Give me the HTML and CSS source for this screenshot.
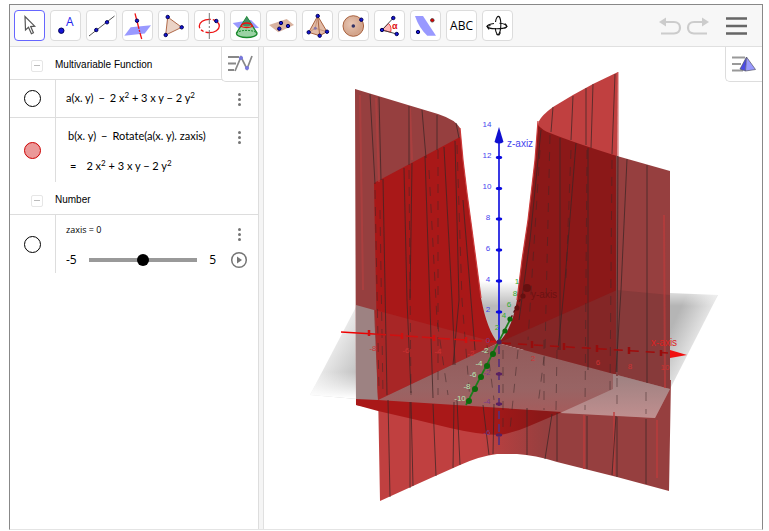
FILE: index.html
```html
<!DOCTYPE html>
<html lang="en">
<head>
    <meta charset="utf-8">
    <title>3D Calculator</title>
    <link rel="stylesheet" href="styles.css">
</head>
<body>
    <div class="app">
        <header class="toolbar">
            <div class="tools">
                <button type="button" class="tool active" aria-label="Move">
                    <svg viewBox="0 0 29 29"><path d="M10 5.5L10.5 19L13.5 16.3L16.4 22.8L18.4 21.8L15.7 15.6L19.7 15.2Z" fill="#fff" stroke="#555" stroke-width="1.2"/></svg>
                </button>
                <button type="button" class="tool" aria-label="Point">
                    <svg viewBox="0 0 29 29"><circle class="pt" cx="10.3" cy="19.7" r="2.7"/><text x="15" y="15" class="point-name">A</text></svg>
                </button>
                <button type="button" class="tool" aria-label="Line">
                    <svg viewBox="0 0 29 29"><path d="M2 25L27.5 5" stroke="#555"/><circle class="pt" cx="9.3" cy="19" r="1.7"/><circle class="pt" cx="20" cy="11.3" r="1.7"/></svg>
                </button>
                <button type="button" class="tool" aria-label="Perpendicular line">
                    <svg viewBox="0 0 29 29"><path d="M1.3 24.7L7.7 16.3L28 14.3L21.7 22.5Z" fill="#9999ff"/><path d="M12 2.3L15.5 16" stroke="#e11" stroke-width="1.3"/><path d="M15.5 16L17 22" stroke="#e11" stroke-width="1.3" stroke-dasharray="2 1"/><path d="M17 22L18.7 28" stroke="#e11" stroke-width="1.3"/><circle class="pt" cx="14" cy="9.7" r="1.7"/></svg>
                </button>
                <button type="button" class="tool" aria-label="Polygon">
                    <svg viewBox="0 0 29 29"><path d="M8.7 6L22.7 16.3L6.7 24Z" fill="#ebd3c6" stroke="#b06a4a"/><circle class="pt" cx="8.7" cy="6" r="1.7"/><circle class="pt" cx="22.7" cy="16.3" r="1.7"/><circle class="pt" cx="6.7" cy="24" r="1.7"/></svg>
                </button>
                <button type="button" class="tool" aria-label="Circle with axis">
                    <svg viewBox="0 0 29 29"><ellipse cx="14.3" cy="15" rx="10" ry="6.7" fill="none" stroke="#e11" stroke-width="1.3" stroke-dasharray="17 2 3 2"/><path d="M14.3 2V13M14.3 15V17M14.3 19V28" stroke="#777"/><circle class="pt" cx="21.3" cy="10" r="1.7"/></svg>
                </button>
                <button type="button" class="tool" aria-label="Intersect two surfaces">
                    <svg viewBox="0 0 29 29"><path d="M1.7 12L20 9L28 17L8 18Z" fill="#9999ff"/><path d="M15.7 6L5.5 22C5 28 26.5 28 26 22Z" fill="#9bd3a4" stroke="#1a8a2c" stroke-width="1.3"/><path d="M5.5 22C9 18.5 22 18.5 26 22" fill="none" stroke="#1a8a2c" stroke-dasharray="2 1"/><path d="M15.7 6L11 14Q15.7 17 20.5 14Z" fill="#3f8f68"/><path d="M10 15.5Q11 12 15.7 12T21.5 15.5Q15.7 17.500 10 15.5Z" fill="none" stroke="#e11" stroke-width="1.3"/></svg>
                </button>
                <button type="button" class="tool" aria-label="Plane through 3 points">
                    <svg viewBox="0 0 29 29"><path d="M2 14L19.7 8L27 14L11.3 21.3Z" fill="#d9b3a0"/><circle class="pt" cx="14" cy="12" r="1.7"/><circle class="pt" cx="21" cy="15" r="1.7"/><circle class="pt" cx="12.3" cy="17.7" r="1.7"/></svg>
                </button>
                <button type="button" class="tool" aria-label="Pyramid">
                    <svg viewBox="0 0 29 29"><path d="M14.7 5L5.7 21.3L16.7 24.7L24 20.7Z" fill="#e2bba6" stroke="#a9623f"/><path d="M14.7 5L16.7 24.7" stroke="#a9623f"/><path d="M14.7 5L12.3 17.3L5.7 21.3M12.3 17.3L24 20.7" stroke="#b98266" fill="none" stroke-width=".7"/><circle cx="12.3" cy="17.3" r="1.5" fill="#8877aa"/><circle class="pt" cx="14.7" cy="5" r="1.7"/><circle class="pt" cx="5.7" cy="21.3" r="1.7"/><circle class="pt" cx="16.7" cy="24.7" r="1.7"/><circle class="pt" cx="24" cy="20.7" r="1.7"/></svg>
                </button>
                <button type="button" class="tool" aria-label="Sphere">
                    <svg viewBox="0 0 29 29"><circle cx="14.3" cy="15" r="10.3" fill="url(#ball)" stroke="#a9623f"/><circle cx="14.3" cy="15" r="1.8" fill="#336"/><circle class="pt" cx="22.3" cy="8.7" r="1.7"/></svg>
                </button>
                <button type="button" class="tool" aria-label="Angle">
                    <svg viewBox="0 0 29 29"><path d="M7 19L13.5 12.5Q17 15.5 15.7 21.2Z" fill="#ffb8b8" stroke="#e11" stroke-width=".8"/><path d="M18.3 7L7 19L21.7 23" fill="none" stroke="#444"/><text x="17" y="18" class="alpha">α</text><circle class="pt" cx="7" cy="19" r="1.7"/><circle class="pt" cx="18.3" cy="7" r="1.7"/><circle class="pt" cx="21.7" cy="23" r="1.7"/></svg>
                </button>
                <button type="button" class="tool" aria-label="Reflect about plane">
                    <svg viewBox="0 0 29 29"><path d="M4 5H12L25 24.7H16.3Q8 17 4 5Z" fill="#9999ff"/><circle cx="21.3" cy="9.3" r="1.8" fill="#d00" stroke="#333" stroke-width=".7"/><circle class="pt" cx="7" cy="21" r="1.7"/></svg>
                </button>
                <button type="button" class="tool tool-text">ABC</button>
                <button type="button" class="tool" aria-label="Rotate view">
                    <svg viewBox="0 0 29 29"><g fill="none" stroke="#111" stroke-width="1.1"><path d="M12.5 11C13 7 14.500 5 16 5.5C18.5 8 18.5 20 15.5 23.5C14.500 25 12.5 21 12.3 17"/><path d="M11 12.5C6.5 13 4 14.500 4.2 15.500C5 18.5 20 18.5 23.5 16C24.5 14 21 12.500 16.500 12.3"/><path d="M6 18.5L4 15.3L7.5 14.5M21.500 17.5L24 15.5L22 12.5M13.5 23.5L16 24L17.5 21.5"/></g></svg>
                </button>
            </div>
            <div class="actions">
                <button type="button" class="plain" aria-label="Undo">
                    <svg width="24" height="20" viewBox="0 0 24 20"><path d="M7 6H16C24 6 24 17.5 16 17.5H3" fill="none" stroke="#ccc" stroke-width="2.2"/><path d="M1 6L8 1.5V10.5Z" fill="#ccc"/></svg>
                </button>
                <button type="button" class="plain" aria-label="Redo">
                    <svg width="24" height="20" viewBox="0 0 24 20"><path d="M17 6H8C0 6 0 17.5 8 17.5H21" fill="none" stroke="#ccc" stroke-width="2.2"/><path d="M23 6L16 1.5V10.5Z" fill="#ccc"/></svg>
                </button>
                <button type="button" class="plain menu" aria-label="Menu">
                    <svg width="22" height="20" viewBox="0 0 22 20"><path d="M0 2.5H21M0 10H21M0 17.5H21" stroke="#666" stroke-width="2.6"/></svg>
                </button>
            </div>
        </header>

        <div class="workspace">
            <aside class="algebra">
                <button type="button" class="stylebar" aria-label="Algebra style bar">
                    <svg width="26" height="20" viewBox="0 0 26 20"><path d="M1 3H12M1 9.5H9M1 16H7" stroke="#888" stroke-width="1.8"/><path d="M8 17L14 3L20 15L25 2" fill="none" stroke="#888" stroke-width="1.7"/><circle cx="14" cy="4" r="2.1" fill="#77d"/><circle cx="20" cy="14" r="2.1" fill="#77d"/></svg>
                </button>

                <h2 class="group"><button type="button" class="toggle" aria-label="Collapse"></button>Multivariable Function</h2>
                <div class="row row-a">
                    <div class="marble-cell"><button type="button" class="marble" aria-label="Show a"></button></div>
                    <div class="definition">
                        <div class="formula"><span>a(x. y)</span><span>−</span><span>2 x<sup>2</sup> + 3 x y − 2 y<sup>2</sup></span></div>
                    </div>
                    <button type="button" class="more" aria-label="More"><i></i><i></i><i></i></button>
                </div>
                <div class="row row-b">
                    <div class="marble-cell"><button type="button" class="marble on" aria-label="Hide b"></button></div>
                    <div class="definition">
                        <div class="formula"><span>b(x. y)</span><span>−</span><span>Rotate(a(x. y). zaxis)</span></div>
                        <div class="formula result"><span>=</span><span>2 x<sup>2</sup> + 3 x y − 2 y<sup>2</sup></span></div>
                    </div>
                    <button type="button" class="more" aria-label="More"><i></i><i></i><i></i></button>
                </div>

                <h2 class="group"><button type="button" class="toggle" aria-label="Collapse"></button>Number</h2>
                <div class="row row-z">
                    <div class="marble-cell"><button type="button" class="marble" aria-label="Show zaxis"></button></div>
                    <div class="definition">
                        <label class="number" for="zaxis">zaxis = 0</label>
                        <div class="slider">
                            <span>-5</span>
                            <input type="range" id="zaxis" min="-5" max="5" value="0">
                            <span>5</span>
                        </div>
                    </div>
                    <div class="controls">
                        <button type="button" class="more" aria-label="More"><i></i><i></i><i></i></button>
                        <button type="button" class="plain" aria-label="Play">
                            <svg width="18" height="18" viewBox="0 0 18 18"><circle cx="9" cy="9" r="7.3" fill="#fff" stroke="#757575" stroke-width="1.5"/><path d="M7 5.5L12 9L7 12.5Z" fill="#757575"/></svg>
                        </button>
                    </div>
                </div>
            </aside>

            <main class="view">
                <button type="button" class="stylebar" aria-label="3D style bar">
                    <svg width="26" height="20" viewBox="0 0 26 20"><path d="M1 3.500H14M1 10H10M1 16.500H12" stroke="#999" stroke-width="1.8"/><path d="M15.5 3L9 15L14.5 17Z" fill="#4b4be6"/><path d="M15.5 3L14.5 17L24.500 15.5Z" fill="#99f"/><path d="M15.5 3L9 15L14.5 17L24.5 15.5ZM15.5 3L14.5 17" fill="none" stroke="#556" stroke-width=".7"/></svg>
                </button>
                <svg class="scene" viewBox="264 47 498 482" role="img" aria-label="3D graph">
                    <defs>
                        <radialGradient id="ball" cx=".4" cy=".4"><stop offset="0" stop-color="#e8c6b4"/><stop offset="1" stop-color="#d3a58c"/></radialGradient>
                        <linearGradient id="planeLeft" x1="320" y1="352" x2="362" y2="376" gradientUnits="userSpaceOnUse"><stop offset="0" stop-color="#f4f4f4"/><stop offset="1" stop-color="#bcbcbc"/></linearGradient>
                        <linearGradient id="planeRight" x1="670" y1="330" x2="704" y2="346" gradientUnits="userSpaceOnUse"><stop offset="0" stop-color="#b5b5b5"/><stop offset="1" stop-color="#f4f4f4"/></linearGradient>
                        <linearGradient id="fadeTop" x1="0" y1="281" x2="0" y2="306" gradientUnits="userSpaceOnUse"><stop offset="0" stop-color="#fff"/><stop offset="1" stop-color="#fff" stop-opacity="0"/></linearGradient>
                        <linearGradient id="fadeBottom" x1="0" y1="398" x2="0" y2="372" gradientUnits="userSpaceOnUse"><stop offset="0" stop-color="#fff"/><stop offset="1" stop-color="#fff" stop-opacity="0"/></linearGradient>
                        <linearGradient id="skirt" x1="480" y1="0" x2="545" y2="0" gradientUnits="userSpaceOnUse"><stop offset="0" stop-color="#c04040"/><stop offset="1" stop-color="#963f3f"/></linearGradient>
                        <linearGradient id="deep" x1="480" y1="0" x2="540" y2="0" gradientUnits="userSpaceOnUse"><stop offset="0" stop-color="#a91818"/><stop offset="1" stop-color="#8b1818"/></linearGradient>
                        <linearGradient id="glass" x1="0" y1="343" x2="0" y2="418" gradientUnits="userSpaceOnUse"><stop offset="0" stop-color="#925a5a"/><stop offset=".6" stop-color="#986464"/><stop offset="1" stop-color="#a85a5a"/></linearGradient>
                        <linearGradient id="glassEdge" x1="0" y1="373" x2="0" y2="418" gradientUnits="userSpaceOnUse"><stop offset="0" stop-color="#9c8080"/><stop offset="1" stop-color="#c08f8f"/></linearGradient>
                    </defs>

                    <!-- xy plane behind the surface -->
                    <path d="M357 305L310 395L357 399Z" fill="url(#planeLeft)"/>
                    <path d="M357 305L310 395L357 399Z" fill="url(#fadeBottom)"/>
                    <path d="M476 281H522V343H476Z" fill="#bababa"/>
                    <path d="M670 293L718 295L670 389Z" fill="url(#planeRight)"/>
                    <path d="M476 281H522V343H476ZM670 292H719L670 389Z" fill="url(#fadeTop)"/>

                    <!-- back sheets -->
                    <path d="M355 89L408 105L438 114Q456 120 460 128V200L390 411L356 405Z" fill="#963f3f"/>
                    <path d="M538 125Q538 118 553 107Q572 95 593 84L618 72L617 200H538Z" fill="#c04040"/>

                    <!-- skirt under the plane -->
                    <path d="M378 390L380 501L413 486L433 477L460 465Q480 456 497 454H517Q535 455 557 462L617 477L669 491L671 380H500Z" fill="url(#skirt)"/>
                    <path d="M356 397V405L378 411L417 420L450 428Q480 435 500 435Q516 432 527 427L560 413L613 389V350H430Z" fill="url(#deep)"/>

                    <!-- front sheets -->
                    <path d="M374 183L460 137V128L463 160L467 193L472 230L481 298Q487 330 498 343L378 400Z" fill="#a91818"/>
                    <path d="M538 121V125Q542 130 550 133Q575 143 617 156V370L498 343Q512 330 517 300L522 260L528 220L535 160Z" fill="#8b1818"/>
                    <path d="M617 156L670 171V389L617 376Z" fill="#963f3f"/>

                    <!-- plane seen through the surface -->
                    <path d="M356 305L374 310L378 400L356 399Z" fill="#9d8282"/>
                    <path d="M375 310L498 343L378 400Z" fill="#a82626"/>
                    <path d="M498 343L617 290V375Z" fill="#842626"/>
                    <path d="M617 290L670 295V389L617 375Z" fill="#873a3a"/>
                    <path d="M378 400L498 343L670 389L655 418Z" fill="url(#glass)"/>
                    <path d="M560 413L613 389V374L670 389L655 418Z" fill="url(#glassEdge)"/>
                    <path d="M617 156V376" stroke="#7f4242" stroke-width="2"/>
                    <path d="M618 72V156" stroke="#d26262"/>
                    <path d="M664 215L665 388M657 420V478M614 412V475M584 415V469" stroke="#bd3b3b" stroke-width="2" opacity=".7"/>
                    <path d="M360 95L363 290M376 98L379 182M410 108L412 160" stroke="#b84040" stroke-width="2" opacity=".6"/>
                    <path d="M460 128L463 160L467 193L472 230L481 298M538 121L535 160L528 220L522 260L517 300" fill="none" stroke="#cc3a3a" stroke-width="1.2"/>

                    <!-- mesh -->
                    <g class="mesh">
                        <path d="M370 94L375 184M379 97L381 180M409 106V165M422 110L426 158M437 115V150M456 123L459 138"/>
                        <path d="M383 179L387 395M404 168L407 300L411 393M412 163L410 300M425 156L433 398M444 147L452 300L455 365M455 141L459 300L453 365M463 200L475 350"/>
                        <path d="M388 400L390 497M410 402V488M411 402L413 486M433 404L436 476M454 402L453 468M457 400L460 465M483 405L489 455M494 404L493 454"/>
                        <path d="M553 107L551 132M573 96L571 140M586 88V145M593 84L591 148M615 74L612 154"/>
                        <path d="M541 130L530 240L519 320M560 138V350M576 143L565 280L558 350M588 148V370M618 156L617 372M627 159L621 290L616 372M647 165V383"/>
                        <path d="M527 408V455M552 414L545 459M557 413V461M587 416V469M616 416L612 475M617 417V477M646 419V484"/>
                    </g>
                    <g class="mesh hidden-lines">
                        <path d="M375 190L379 390M380 210L383 395M409 170L411 395M429 170L437 320L448 395M438 150V395M457 145L462 300L470 400M487 345L494 400"/>
                        <path d="M540 150L528 340M550 135L545 350L538 405M571 150L566 280M587 150L585 410M612 160L610 390M544 340V410M518 350L510 430M503 350V430M557 350L556 410M617 378V412M646 392V414"/>
                    </g>

                    <!-- x axis -->
                    <path d="M341 332L374 334" stroke="#e00" stroke-width="1.5"/>
                    <path d="M374 334L497 342" stroke="#d01010" stroke-width="1.5" stroke-dasharray="12 4"/>
                    <path d="M502 343L668 353" stroke="#a00c0c" stroke-width="1.5" stroke-dasharray="9 7"/>
                    <path d="M369 330V336M402 333V339M434 335V341M466 337V343" stroke="#d01010" stroke-width="2.5"/>
                    <path d="M532 341V348M564 343V350M597 345V352M629 347V354M661 350V356" stroke="#960c0c" stroke-width="2.5"/>
                    <path d="M670 350L687 355L670 358Z" fill="#f01010"/>
                    <g class="label x-label">
                        <text x="373" y="351">-8</text><text x="406" y="353">-6</text><text x="438" y="354">-4</text><text x="471" y="356">-2</text>
                        <text x="533" y="361">2</text><text x="598" y="365">6</text><text x="630" y="369">8</text><text x="665" y="370">10</text>
                    </g>
                    <text x="651" y="346" class="axis-name x-name">x-axis</text>

                    <!-- z axis -->
                    <path d="M499 141V342" stroke="#1717e0" stroke-width="1.7"/>
                    <path d="M499 346V445" stroke="#58307a" stroke-width="1.7" stroke-dasharray="8 5"/>
                    <path d="M499 127L503.5 142Q499 145 494.5 142Z" fill="#1010d0"/>
                    <g fill="#0a0ae0">
                        <ellipse cx="499" cy="157.5" rx="3.2" ry="1.7"/><ellipse cx="499" cy="188.5" rx="3.2" ry="1.7"/><ellipse cx="499" cy="219" rx="3.2" ry="1.7"/><ellipse cx="499" cy="250" rx="3.2" ry="1.7"/><ellipse cx="499" cy="281" rx="3.2" ry="1.7"/><ellipse cx="499" cy="312" rx="3.2" ry="1.7"/>
                    </g>
                    <g fill="#5a2060">
                        <ellipse cx="499" cy="374" rx="3.2" ry="1.7"/><ellipse cx="499" cy="404" rx="3.2" ry="1.7"/><ellipse cx="499" cy="435" rx="3.2" ry="1.7"/>
                    </g>
                    <g class="label z-label">
                        <text x="487" y="127">14</text><text x="487" y="158">12</text><text x="487" y="189">10</text><text x="488" y="220">8</text><text x="488" y="251">6</text><text x="488" y="282">4</text><text x="488" y="312">2</text>
                    </g>
                    <g class="label z-low">
                        <text x="488" y="343">0</text><text x="487" y="375">-2</text><text x="487" y="404">-4</text><text x="487" y="435">-6</text>
                    </g>
                    <text x="507" y="147" class="axis-name z-name">z-axiz</text>

                    <!-- y axis -->
                    <path d="M466 405L511 318" stroke="#1b7d1b" stroke-width="1.7"/>
                    <path d="M511 318L524 292" stroke="#5c1717" stroke-width="1.5" stroke-dasharray="3 3"/>
                    <g fill="#0c6a0c">
                        <circle cx="469" cy="401" r="3"/><circle cx="475" cy="389" r="3"/><circle cx="481" cy="377" r="3"/><circle cx="487" cy="366" r="3"/><circle cx="493" cy="354" r="3"/><circle cx="505" cy="331" r="2.6"/><circle cx="510" cy="319" r="2.6"/>
                    </g>
                    <circle cx="499" cy="342" r="2.5" fill="#482060"/>
                    <g fill="#651010">
                        <circle cx="517" cy="308" r="2.6"/><circle cx="523" cy="296" r="2.6"/><circle cx="527" cy="288" r="4"/>
                    </g>
                    <g class="label y-low">
                        <text x="485" y="353">-2</text><text x="479" y="366">-4</text><text x="473" y="377">-6</text><text x="467" y="389">-8</text><text x="460" y="401">-10</text>
                    </g>
                    <g class="label y-label">
                        <text x="497" y="330">2</text><text x="504" y="318">4</text><text x="509" y="307">6</text><text x="515" y="296">8</text><text x="517" y="284">1</text>
                    </g>
                    <text x="531" y="298" class="axis-name y-name">y-axis</text>
                </svg>
            </main>
        </div>
    </div>
</body>
</html>
```

FILE: styles.css
```css
* { box-sizing: border-box; }
body { margin: 0; padding: 4px 6px 0 9px; background: #fff; color: #000; font-family: "Liberation Sans", Arial, sans-serif; }
button { margin: 0; padding: 0; font: inherit; color: inherit; background: none; border: none; cursor: pointer; }
svg { display: block; }

.app { display: flex; flex-direction: column; min-height: calc(100vh - 5px); border: 1px solid #888; border-bottom: 1px solid #e4e4e4; }

/* toolbar */
.toolbar { display: flex; justify-content: space-between; align-items: center; height: 42px; padding: 0 14px 0 4px; background: #f7f7f7; border-bottom: 1px solid #e0e0e0; }
.tools { display: flex; gap: 5px; }
.tool { width: 31px; height: 31px; background: #fff; border: 1px solid #dcdcdc; border-radius: 4px; }
.tool.active { border-color: #6666ff; }
.tool-text { font: 12px "Open Sans", sans-serif; }
.actions { display: flex; align-items: center; gap: 4px; }
.menu { margin-left: 12px; }
.pt { fill: #1515d8; stroke: #000055; stroke-width: 1; }
.point-name { font: 12px "Open Sans", sans-serif; fill: #2222ee; }
.alpha { font: bold 9px "Liberation Sans", sans-serif; fill: #dd1111; }

.workspace { display: flex; flex: 1; }
.stylebar { position: absolute; top: 0; right: 0; display: flex; align-items: center; justify-content: center; width: 37px; height: 35px; background: #fff; border: 1px solid #dddddd; border-width: 0 0 1px 1px; border-radius: 0 0 0 5px; }

/* algebra list */
.algebra { position: relative; flex: 0 0 249px; min-width: 0; border-right: 1px solid #dddddd; }
.group { display: flex; align-items: center; gap: 12px; height: 33px; margin: 0; padding: 2px 0 0 21px; font-size: 10px; font-weight: normal; border-bottom: 1px solid #dddddd; }
.toggle { display: flex; align-items: center; justify-content: center; width: 12px; height: 12px; margin-top: 3px; border: 1px solid #e6e6e6; border-radius: 2px; }
.toggle::before { content: ""; width: 6px; height: 1px; background: #bbb; }
.row { display: flex; }
.row-a { height: 38px; border-bottom: 1px solid #dddddd; }
.row-b { height: 64px; }
.row-z { height: 58px; }
.marble-cell { display: flex; align-items: center; justify-content: center; flex: 0 0 46px; border-right: 1px solid #dddddd; }
.marble { width: 17px; height: 17px; border: 1px solid #000; border-radius: 50%; }
.marble.on { background: #eb9999; border-color: #cc0000; }
.definition { flex: 1; min-width: 0; padding: 8px 0 0 10px; }
.row-b .definition { padding-left: 12px; }
.formula { display: flex; gap: 5px; font: 11px/20px Lato, sans-serif; white-space: pre; }
.formula sup { font-size: 8px; line-height: 0; vertical-align: 4px; }
.result { gap: 10px; margin-top: 10px; padding-left: 2px; }
.more { display: flex; flex-direction: column; align-items: center; justify-content: center; gap: 2px; width: 18px; height: 20px; margin: 9px 10px 0 0; }
.more i { width: 3px; height: 3px; background: #757575; border-radius: 50%; }
.number { display: block; font: 9px/14px "Open Sans", sans-serif; }
.slider { display: flex; align-items: center; gap: 12px; margin-top: 15px; font: 12px/16px "Open Sans", sans-serif; }
.slider input { flex: 1; min-width: 0; height: 12px; margin: 0; appearance: none; background: linear-gradient(#999, #999) center / 100% 4px no-repeat; }
.slider input::-webkit-slider-thumb { appearance: none; width: 12px; height: 12px; background: #000; border-radius: 50%; }
.controls { display: flex; flex-direction: column; gap: 7px; padding-left: 14px; }

/* 3D view */
.view { position: relative; flex: 1; min-width: 0; margin-left: 4px; border-left: 1px solid #e0e0e0; box-shadow: -4px 0 0 #f5f5f5; }
.scene { width: 100%; height: auto; }
.label { font: 8px "Liberation Sans", sans-serif; text-anchor: middle; }
.axis-name { font: 10px "Liberation Sans", sans-serif; }
.z-label, .z-name { fill: #4444ee; }
.z-low { fill: #7a3a8a; }
.x-label { fill: #cc3333; }
.x-name { fill: #dd2222; }
.y-label { fill: #33aa33; }
.y-low { fill: #b5eab5; }
.y-name { fill: #6b1212; }
.mesh path { fill: none; stroke: #3c2525; stroke-width: 1; opacity: .75; }
.hidden-lines path { stroke-dasharray: 9 8; opacity: .5; }
```
